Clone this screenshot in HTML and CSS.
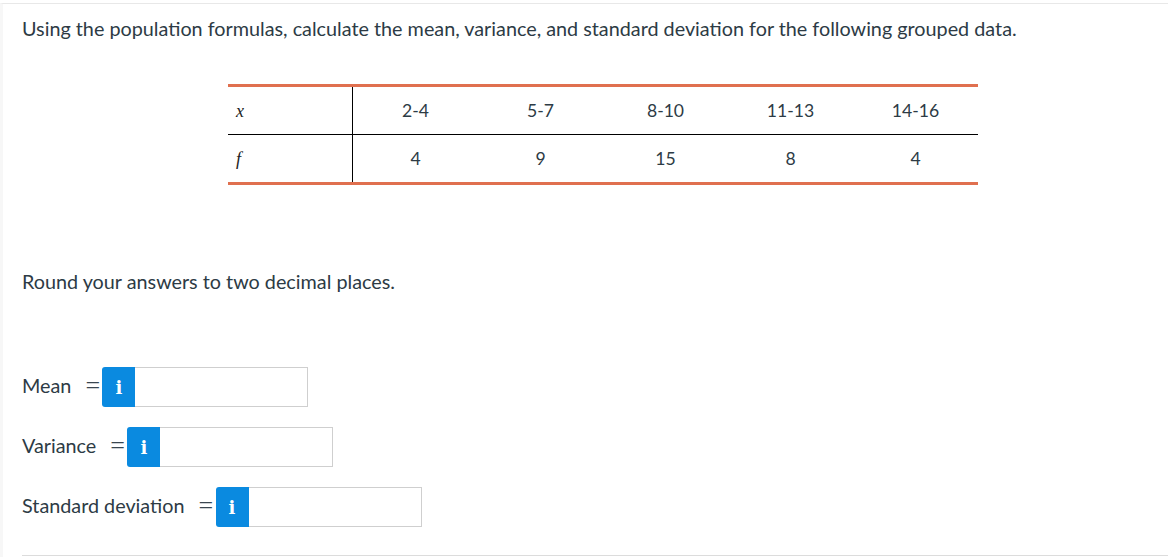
FILE: index.html
```html
<!DOCTYPE html>
<html>
<head>
<meta charset="utf-8">
<link rel="stylesheet" href="styles.css">
</head>
<body>
<div class="page">
  <p class="prompt">Using the population formulas, calculate the mean, variance, and standard deviation for the following grouped data.</p>
  <table class="data">
    <tr class="row-x">
      <td class="head"><span class="var">x</span></td>
      <td>2-4</td><td>5-7</td><td>8-10</td><td>11-13</td><td>14-16</td>
    </tr>
    <tr class="row-f">
      <td class="head"><span class="var">f</span></td>
      <td>4</td><td>9</td><td>15</td><td>8</td><td>4</td>
    </tr>
  </table>
  <p class="note">Round your answers to two decimal places.</p>
  <div class="answers">
    <div class="answer">
      <span class="label">Mean</span><span class="eq">=</span>
      <span class="info">i</span><span class="field"></span>
    </div>
    <div class="answer">
      <span class="label">Variance</span><span class="eq">=</span>
      <span class="info">i</span><span class="field"></span>
    </div>
    <div class="answer">
      <span class="label">Standard deviation</span><span class="eq">=</span>
      <span class="info">i</span><span class="field"></span>
    </div>
  </div>
  <div class="rule"></div>
</div>
</body>
</html>
```

FILE: styles.css
```css
html, body {
  margin: 0;
  padding: 0;
  background: #ffffff;
}
body {
  font-family: Lato, "Open Sans", sans-serif;
  color: #2d3b45;
}
.page {
  margin-top: 3px;
  border-top: 1px solid #e8e8e8;
  border-left: 3px solid #f7f7f7;
  padding: 11px 0 0 19px;
  height: 560px;
  box-sizing: border-box;
}
.prompt {
  margin: 0;
  font-size: 19.8px;
  line-height: 27px;
}
.data {
  margin: 42px 0 0 206px;
  border-collapse: collapse;
  border-top: 3px solid #e0704f;
  border-bottom: 3px solid #e0704f;
  font-size: 17.6px;
}
.data td {
  width: 125px;
  height: 47px;
  padding: 0;
  text-align: center;
  vertical-align: middle;
  box-sizing: content-box;
}
.data td.head {
  width: 116px;
  text-align: left;
  padding-left: 8px;
  border-right: 1px solid #000;
}
.row-x td {
  border-bottom: 1px solid #000;
}
.var {
  font-family: "Liberation Serif", "DejaVu Serif", serif;
  font-style: italic;
  font-size: 18px;
  color: #222;
}
.note {
  margin: 83px 0 0;
  font-size: 19.8px;
  line-height: 27px;
}
.answers {
  margin-top: 72px;
  display: flex;
  flex-direction: column;
  gap: 20px;
}
.answer {
  display: flex;
  align-items: center;
  height: 40px;
  font-size: 19.8px;
}
.label {
  margin-right: 14px;
  padding-bottom: 5px;
}
.eq {
  font-family: "Liberation Serif", serif;
  font-size: 26px;
  color: #3a4650;
  width: 13px;
  margin-right: 4px;
  line-height: 1;
  padding-bottom: 3px;
}
.info {
  width: 33px;
  height: 40px;
  background: #0a8ae0;
  border-radius: 3px 0 0 3px;
  color: #fff;
  font-family: "DejaVu Serif", serif;
  font-weight: bold;
  font-size: 18px;
  display: flex;
  align-items: center;
  justify-content: center;
}
.field {
  width: 173px;
  height: 40px;
  box-sizing: border-box;
  border: 1px solid #cfcfcf;
  border-left: none;
  background: #fff;
}
.rule {
  margin-top: 28px;
  border-top: 1px solid #dcdcdc;
}
```
